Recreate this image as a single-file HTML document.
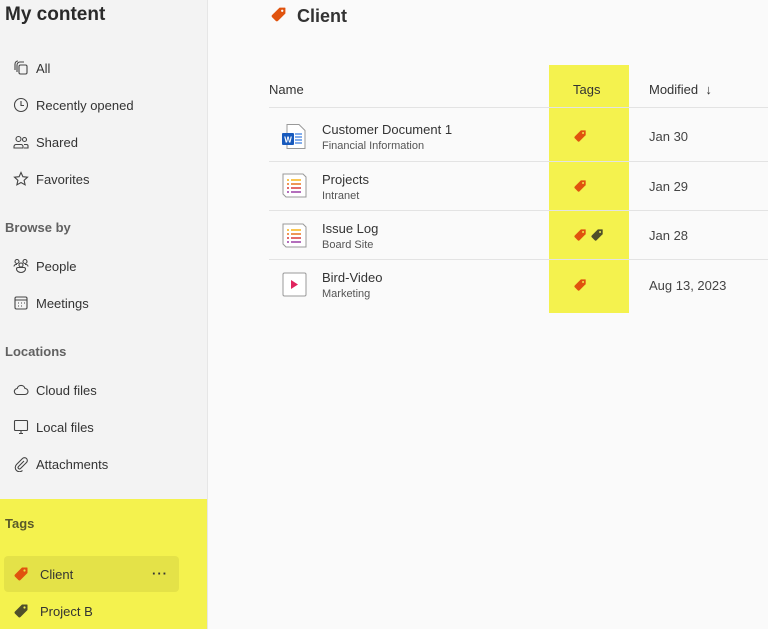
<!DOCTYPE html>
<html><head><meta charset="utf-8"><style>
*{margin:0;padding:0;box-sizing:border-box}
body{width:768px;height:629px;overflow:hidden;background:#fafafa;font-family:"Liberation Sans",sans-serif;color:#242424;position:relative}
.side{position:absolute;left:0;top:0;width:208px;height:629px;background:#f3f3f3;border-right:1px solid #e6e6e6}
.a{position:absolute;font-size:13px;color:#333}
.h{position:absolute;font-size:13px;color:#616161;font-weight:bold;left:5px}
.ic{position:absolute;left:13px;width:16px;height:16px}
.it{position:absolute;left:36px;font-size:13px;color:#333}
.yl{position:absolute;background:#f4f24e}
.row{position:absolute;left:269px;width:499px;border-top:1px solid #e3e3e3}
.t1{position:absolute;left:322px;font-size:13px;color:#333}
.t2{position:absolute;left:322px;font-size:11px;color:#555}
.dt{position:absolute;left:649px;font-size:13px;color:#444}
</style></head><body>
<div class="side"></div>
<div style="position:absolute;left:5px;top:4px;font-size:19px;font-weight:bold;color:#2a2a2a">My content</div>

<svg class="ic" style="top:60px" viewBox="0 0 16 16" fill="none" stroke="#444" stroke-width="1.1"><rect x="6" y="5" width="8" height="9" rx="1.5"/><path d="M4 12V5a3 3 0 0 1 3-3h4M2 10V4a3 3 0 0 1 3-3"/></svg>
<div class="it" style="top:61px">All</div>
<svg class="ic" style="top:97px" viewBox="0 0 16 16" fill="none" stroke="#444" stroke-width="1.1"><circle cx="8" cy="8" r="6.5"/><path d="M8 4v4.5h3"/></svg>
<div class="it" style="top:98px">Recently opened</div>
<svg class="ic" style="top:134px" viewBox="0 0 16 16" fill="none" stroke="#444" stroke-width="1.1"><circle cx="5.5" cy="5" r="2.5"/><circle cx="11.5" cy="5.5" r="2"/><path d="M1 14v-1.5a2 2 0 0 1 2-2h5a2 2 0 0 1 2 2V14zM11 10.5h2.5a1.5 1.5 0 0 1 1.5 1.5v2h-4"/></svg>
<div class="it" style="top:135px">Shared</div>
<svg class="ic" style="top:171px" viewBox="0 0 16 16" fill="none" stroke="#444" stroke-width="1.1"><path d="M8 1.5l1.9 4.2 4.6.5-3.4 3.1 1 4.5L8 11.5l-4.1 2.3 1-4.5L1.5 6.2l4.6-.5z"/></svg>
<div class="it" style="top:172px">Favorites</div>

<div class="h" style="top:220px">Browse by</div>
<svg class="ic" style="top:258px" viewBox="0 0 16 16" fill="none" stroke="#444" stroke-width="1.1"><circle cx="4" cy="3.5" r="2"/><circle cx="12" cy="3.5" r="2"/><circle cx="8" cy="7" r="2"/><path d="M1 8.5a2 2 0 0 1 2-2h1M15 8.5a2 2 0 0 0-2-2h-1M3.5 11a1.5 1.5 0 0 1 1.5-1.5h6a1.5 1.5 0 0 1 1.5 1.5 4.5 3.5 0 0 1-9 0z"/></svg>
<div class="it" style="top:259px">People</div>
<svg class="ic" style="top:295px" viewBox="0 0 16 16" fill="none" stroke="#444" stroke-width="1.1"><rect x="2" y="2" width="12" height="12" rx="1.5"/><path d="M2 5h12M5 8h1M8 8h1M11 8h1M5 11h1M8 11h1"/></svg>
<div class="it" style="top:296px">Meetings</div>

<div class="h" style="top:344px">Locations</div>
<svg class="ic" style="top:382px" viewBox="0 0 16 16" fill="none" stroke="#444" stroke-width="1.1"><path d="M4.5 12.5a3 3 0 0 1-.3-6A4 4 0 0 1 12 6.5a3 3 0 0 1 0 6z"/></svg>
<div class="it" style="top:383px">Cloud files</div>
<svg class="ic" style="top:419px" viewBox="0 0 16 16" fill="none" stroke="#444" stroke-width="1.1"><rect x="1.5" y="1.5" width="13" height="10" rx="1"/><path d="M6 14.5h4M8 11.5v3"/></svg>
<div class="it" style="top:420px">Local files</div>
<svg class="ic" style="top:456px" viewBox="0 0 16 16" fill="none" stroke="#444" stroke-width="1.1"><path d="M11 5l-5.5 5.5a1.4 1.4 0 0 0 2 2l6-6a2.8 2.8 0 0 0-4-4l-6 6a4.2 4.2 0 0 0 6 6"/></svg>
<div class="it" style="top:457px">Attachments</div>

<div class="yl" style="left:0;top:499px;width:207px;height:130px"></div>
<div class="h" style="top:516px;color:#5a5a2a">Tags</div>
<div style="position:absolute;left:4px;top:556px;width:175px;height:36px;background:#e4e248;border-radius:4px"></div>
<svg class="ic" style="top:566px" viewBox="0 0 16 16"><path d="M9 1.5h5a.5.5 0 0 1 .5.5v5L7.5 14a1.5 1.5 0 0 1-2.1 0L2 10.6a1.5 1.5 0 0 1 0-2.1z" fill="#e0530e"/><circle cx="11.5" cy="4.5" r="1.1" fill="#e4e248"/></svg>
<div class="it" style="top:567px;left:40px">Client</div>
<div style="position:absolute;left:152px;top:566px;font-size:13px;color:#333;letter-spacing:1px;font-weight:bold">···</div>
<svg class="ic" style="top:603px" viewBox="0 0 16 16"><path d="M9 1.5h5a.5.5 0 0 1 .5.5v5L7.5 14a1.5 1.5 0 0 1-2.1 0L2 10.6a1.5 1.5 0 0 1 0-2.1z" fill="#4f4f2a"/><circle cx="11.5" cy="4.5" r="1.1" fill="#f4f24e"/></svg>
<div class="it" style="top:604px;left:40px">Project B</div>

<!-- main -->
<svg style="position:absolute;left:270px;top:6px;width:17px;height:17px" viewBox="0 0 16 16"><path d="M9 1.5h5a.5.5 0 0 1 .5.5v5L7.5 14a1.5 1.5 0 0 1-2.1 0L2 10.6a1.5 1.5 0 0 1 0-2.1z" fill="#e0530e"/><circle cx="11.5" cy="4.5" r="1.1" fill="#fafafa"/></svg>
<div style="position:absolute;left:297px;top:6px;font-size:18px;font-weight:bold;color:#333">Client</div>

<div class="yl" style="left:549px;top:65px;width:80px;height:248px"></div>
<div class="a" style="left:269px;top:82px">Name</div>
<div class="a" style="left:573px;top:82px">Tags</div>
<div class="a" style="left:649px;top:82px">Modified&nbsp;&nbsp;↓</div>

<div class="row" style="top:107px"></div>
<div class="row" style="top:161px"></div>
<div class="row" style="top:210px"></div>
<div class="row" style="top:259px"></div>

<svg style="position:absolute;left:281px;top:123px;width:27px;height:27px" viewBox="0 0 27 27"><path d="M6 1.5h12l6 6v18H6z" fill="#fff" stroke="#999"/><path d="M14 11h7M14 14h7M14 17h7M14 20h7" stroke="#3b7de0" stroke-width="1.3"/><rect x="1" y="10" width="12" height="12" rx="1" fill="#185abd"/><text x="7" y="19.5" font-size="8" font-weight="bold" fill="#fff" text-anchor="middle" font-family="Liberation Sans">W</text></svg>
<div class="t1" style="top:122px">Customer Document 1</div><div class="t2" style="top:140px">Financial Information</div>

<svg style="position:absolute;left:281px;top:172px;width:27px;height:27px" viewBox="0 0 27 27"><path d="M2 2h20l3 3v20H5l-3-3z" fill="#fff" stroke="#999"/><path d="M6 8h2M10 8h10" stroke="#f8b418" stroke-width="1.6"/><path d="M6 12h2M10 12h10" stroke="#e9731e" stroke-width="1.6"/><path d="M6 16h2M10 16h10" stroke="#d93a3a" stroke-width="1.6"/><path d="M6 20h2M10 20h10" stroke="#9b3fa6" stroke-width="1.6"/></svg>
<div class="t1" style="top:172px">Projects</div><div class="t2" style="top:190px">Intranet</div>

<svg style="position:absolute;left:281px;top:222px;width:27px;height:27px" viewBox="0 0 27 27"><path d="M2 2h20l3 3v20H5l-3-3z" fill="#fff" stroke="#999"/><path d="M6 8h2M10 8h10" stroke="#f8b418" stroke-width="1.6"/><path d="M6 12h2M10 12h10" stroke="#e9731e" stroke-width="1.6"/><path d="M6 16h2M10 16h10" stroke="#d93a3a" stroke-width="1.6"/><path d="M6 20h2M10 20h10" stroke="#9b3fa6" stroke-width="1.6"/></svg>
<div class="t1" style="top:221px">Issue Log</div><div class="t2" style="top:239px">Board Site</div>

<svg style="position:absolute;left:281px;top:271px;width:27px;height:27px" viewBox="0 0 27 27"><rect x="2" y="2" width="23" height="23" rx="1.5" fill="#fff" stroke="#999"/><path d="M10 9l7 4.5-7 4.5z" fill="#e0245e"/></svg>
<div class="t1" style="top:270px">Bird-Video</div><div class="t2" style="top:288px">Marketing</div>

<svg style="position:absolute;left:573px;top:129px;width:14px;height:14px" viewBox="0 0 16 16"><path d="M9 1.5h5a.5.5 0 0 1 .5.5v5L7.5 14a1.5 1.5 0 0 1-2.1 0L2 10.6a1.5 1.5 0 0 1 0-2.1z" fill="#e0530e"/><circle cx="11.5" cy="4.5" r="1.1" fill="#f4f24e"/></svg>
<svg style="position:absolute;left:573px;top:179px;width:14px;height:14px" viewBox="0 0 16 16"><path d="M9 1.5h5a.5.5 0 0 1 .5.5v5L7.5 14a1.5 1.5 0 0 1-2.1 0L2 10.6a1.5 1.5 0 0 1 0-2.1z" fill="#e0530e"/><circle cx="11.5" cy="4.5" r="1.1" fill="#f4f24e"/></svg>
<svg style="position:absolute;left:573px;top:228px;width:14px;height:14px" viewBox="0 0 16 16"><path d="M9 1.5h5a.5.5 0 0 1 .5.5v5L7.5 14a1.5 1.5 0 0 1-2.1 0L2 10.6a1.5 1.5 0 0 1 0-2.1z" fill="#e0530e"/><circle cx="11.5" cy="4.5" r="1.1" fill="#f4f24e"/></svg>
<svg style="position:absolute;left:590px;top:228px;width:14px;height:14px" viewBox="0 0 16 16"><path d="M9 1.5h5a.5.5 0 0 1 .5.5v5L7.5 14a1.5 1.5 0 0 1-2.1 0L2 10.6a1.5 1.5 0 0 1 0-2.1z" fill="#4f4f2a"/><circle cx="11.5" cy="4.5" r="1.1" fill="#f4f24e"/></svg>
<svg style="position:absolute;left:573px;top:278px;width:14px;height:14px" viewBox="0 0 16 16"><path d="M9 1.5h5a.5.5 0 0 1 .5.5v5L7.5 14a1.5 1.5 0 0 1-2.1 0L2 10.6a1.5 1.5 0 0 1 0-2.1z" fill="#e0530e"/><circle cx="11.5" cy="4.5" r="1.1" fill="#f4f24e"/></svg>

<div class="dt" style="top:129px">Jan 30</div>
<div class="dt" style="top:179px">Jan 29</div>
<div class="dt" style="top:228px">Jan 28</div>
<div class="dt" style="top:278px">Aug 13, 2023</div>
</body></html>
